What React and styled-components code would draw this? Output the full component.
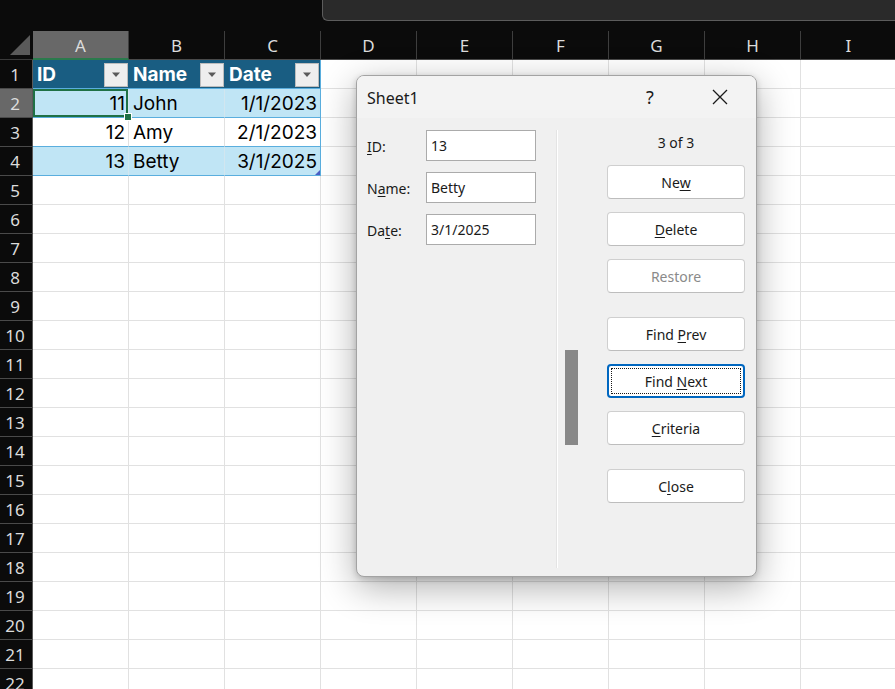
import React from "react";
import styled, { createGlobalStyle, css } from "styled-components";

const GlobalStyle = createGlobalStyle`
  html, body {
    margin: 0;
    padding: 0;
    background: #ffffff;
    overflow: hidden;
  }
  #root {
    position: relative;
    width: 895px;
    height: 689px;
    overflow: hidden;
  }
`;

const COLS = ["A", "B", "C", "D", "E", "F", "G", "H", "I"];
const ROW_COUNT = 22;

const rows = [
  { id: "11", name: "John", date: "1/1/2023" },
  { id: "12", name: "Amy", date: "2/1/2023" },
  { id: "13", name: "Betty", date: "3/1/2025" },
];

const Page = styled.div`
  width: 895px;
  height: 689px;
  background: #ffffff;
  display: flex;
  flex-direction: column;
  overflow: hidden;
`;

const TopBand = styled.div`
  height: 31px;
  flex-shrink: 0;
  background: #0b0b0b;
  display: flex;
`;

const FormulaBar = styled.div`
  margin-left: 322px;
  flex: 1;
  height: 20px;
  background: #2a2a2a;
  border: 1px solid #5c5c5c;
  border-top: none;
  border-right: none;
  border-bottom-left-radius: 6px;
`;

const Grid = styled.div`
  flex-shrink: 0;
  display: grid;
  grid-template-columns: 33px repeat(9, 96px);
  grid-auto-rows: 29px;
`;

const Corner = styled.div`
  background: #0b0b0b;
  border-bottom: 1px solid #3a3a3a;
  display: flex;
  align-items: flex-end;
  justify-content: flex-end;
  padding: 0 3px 4px 0;
  box-sizing: border-box;
`;

const ColHead = styled.div`
  box-sizing: border-box;
  background: ${(p) => (p.$selected ? "#686868" : "#0b0b0b")};
  border-right: 1px solid #3e3e3e;
  border-bottom: ${(p) => (p.$selected ? "2px solid #2a7a4c" : "1px solid #4a4a4a")};
  color: #dcdcdc;
  font-family: "Noto Sans", "Open Sans", sans-serif;
  font-size: 17px;
  display: flex;
  align-items: center;
  justify-content: center;
  padding-top: 1px;
`;

const RowHead = styled.div`
  box-sizing: border-box;
  background: ${(p) => (p.$selected ? "#686868" : "#0b0b0b")};
  border-bottom: 1px solid #4a4a4a;
  border-right: 1px solid #5a5a5a;
  color: #dcdcdc;
  font-family: "Noto Sans", "Open Sans", sans-serif;
  font-size: 17px;
  display: flex;
  align-items: center;
  justify-content: center;
  padding-right: 2px;
`;

const variants = {
  empty: css`
    background: #ffffff;
    border-right: 1px solid #e1e1e1;
    border-bottom: 1px solid #e1e1e1;
  `,
  head: css`
    background: #195d82;
    color: #ffffff;
    font-weight: 700;
    border-bottom: 1px solid #5aaede;
  `,
  band: css`
    background: #c0e5f5;
    border-right: 1px solid #d2e6ef;
    border-bottom: 1px solid #5aaede;
  `,
  plain: css`
    background: #ffffff;
    border-right: 1px solid #e1e1e1;
    border-bottom: 1px solid #5aaede;
  `,
};

const Cell = styled.div`
  position: relative;
  box-sizing: border-box;
  font-family: "Inter", "Liberation Sans", sans-serif;
  font-size: 19px;
  color: #000000;
  display: flex;
  align-items: center;
  justify-content: ${(p) => (p.$right ? "flex-end" : "space-between")};
  padding: ${(p) => (p.$right ? "1px 3px 0 0" : "1px 0 0 4px")};
  white-space: nowrap;
  ${(p) => variants[p.$variant]}
  ${(p) =>
    p.$lastCol &&
    css`
      border-right: 1px solid #5aaede;
    `}
  ${(p) =>
    p.$active &&
    css`
      box-shadow: inset 0 0 0 2px #1f7145;
      &::after {
        content: "";
        position: absolute;
        right: -4px;
        bottom: -4px;
        width: 6px;
        height: 6px;
        background: #1f7145;
        border: 1px solid #ffffff;
        z-index: 2;
      }
    `}
  ${(p) =>
    p.$resize &&
    css`
      &::after {
        content: "";
        position: absolute;
        right: 0;
        bottom: 0;
        width: 0;
        height: 0;
        border-left: 5px solid transparent;
        border-bottom: 5px solid #4a5ec4;
      }
    `}
`;

const FilterBtn = styled.div`
  width: 24px;
  height: 24px;
  box-sizing: border-box;
  margin-right: 1px;
  background: #eeeeee;
  border: 1px solid #bdbdbd;
  display: flex;
  align-items: center;
  justify-content: center;
`;

/* ---------- dialog ---------- */

const Dialog = styled.div`
  position: absolute;
  left: 356px;
  top: 75px;
  width: 401px;
  height: 502px;
  box-sizing: border-box;
  border: 1px solid #a3a3a3;
  border-radius: 8px;
  background: #f0f0f0;
  box-shadow: 0 10px 36px rgba(0, 0, 0, 0.32), 0 2px 6px rgba(0, 0, 0, 0.18);
  display: flex;
  flex-direction: column;
  overflow: hidden;
  font-family: "Noto Sans", "Open Sans", sans-serif;
  font-size: 14px;
  color: #1a1a1a;
`;

const TitleBar = styled.div`
  height: 42px;
  flex-shrink: 0;
  background: #f3f3f3;
  display: flex;
  align-items: center;
  padding-left: 10px;
`;

const Title = styled.div`
  flex: 1;
  font-size: 16px;
  padding-top: 1px;
`;

const HelpMark = styled.div`
  width: 46px;
  font-size: 18px;
  text-align: center;
  margin-right: 24px;
`;

const CloseX = styled.div`
  width: 46px;
  display: flex;
  justify-content: center;
  margin-right: 13px;
`;

const Body = styled.div`
  flex: 1;
  display: flex;
`;

const FieldPanel = styled.div`
  width: 199px;
  padding: 12px 0 0 10px;
  box-sizing: border-box;
  display: flex;
  flex-direction: column;
  gap: 11px;
`;

const FieldRow = styled.div`
  display: flex;
  align-items: center;
`;

const Label = styled.div`
  width: 59px;
  padding-top: 2px;
`;

const Input = styled.div`
  width: 110px;
  height: 31px;
  box-sizing: border-box;
  background: #ffffff;
  border: 1px solid #ababab;
  padding: 0 0 0 4px;
  display: flex;
  align-items: center;
`;

const Key = styled.span`
  text-decoration: underline;
  text-underline-offset: 2px;
`;

const Divider = styled.div`
  width: 1px;
  margin: 12px 0 8px;
  background: #ffffff;
  border-left: 1px solid #e4e4e4;
`;

const ScrollTrack = styled.div`
  width: 13px;
  margin-left: 7px;
  padding-top: 232px;
`;

const Thumb = styled.div`
  height: 95px;
  background: #888888;
`;

const ButtonPanel = styled.div`
  margin-left: 29px;
  width: 138px;
  padding-top: 15px;
  display: flex;
  flex-direction: column;
`;

const Counter = styled.div`
  text-align: center;
  height: 20px;
  line-height: 20px;
  margin-bottom: 12px;
`;

const Button = styled.div`
  height: 34px;
  box-sizing: border-box;
  background: #ffffff;
  border: 1px solid #cfcfcf;
  border-bottom-color: #bdbdbd;
  border-radius: 4px;
  display: flex;
  align-items: center;
  justify-content: center;
  color: ${(p) => (p.$disabled ? "#8a8a8a" : "#1a1a1a")};
  margin-top: ${(p) => p.$gap || 0}px;
  ${(p) =>
    p.$focused &&
    css`
      border: 2px solid #0067c0;
      padding: 2px;
    `}
`;

const FocusRing = styled.div`
  flex: 1;
  align-self: stretch;
  display: flex;
  align-items: center;
  justify-content: center;
  border: 1px dotted #1a1a1a;
`;

function Triangle() {
  return (
    <svg width="10" height="6" viewBox="0 0 10 6">
      <path d="M1 0.5 L9 0.5 L5 5 Z" fill="#5a5a5a" />
    </svg>
  );
}

function App() {
  const headers = ["ID", "Name", "Date"];

  const renderRow = (r) => {
    const cells = [];
    cells.push(
      <RowHead key="h" $selected={r === 2}>
        {r}
      </RowHead>
    );
    COLS.forEach((c, ci) => {
      const key = c + r;
      if (r === 1 && ci < 3) {
        cells.push(
          <Cell key={key} $variant="head" $lastCol={ci === 2}>
            {headers[ci]}
            <FilterBtn>
              <Triangle />
            </FilterBtn>
          </Cell>
        );
      } else if (r >= 2 && r <= 4 && ci < 3) {
        const d = rows[r - 2];
        const variant = r === 3 ? "plain" : "band";
        const value = ci === 0 ? d.id : ci === 1 ? d.name : d.date;
        cells.push(
          <Cell
            key={key}
            $variant={variant}
            $right={ci !== 1}
            $lastCol={ci === 2}
            $active={r === 2 && ci === 0}
            $resize={r === 4 && ci === 2}
          >
            {value}
          </Cell>
        );
      } else {
        cells.push(<Cell key={key} $variant="empty" />);
      }
    });
    return cells;
  };

  return (
    <Page>
      <GlobalStyle />
      <TopBand>
        <FormulaBar />
      </TopBand>
      <Grid>
        <Corner>
          <svg width="20" height="20" viewBox="0 0 20 20">
            <path d="M20 0 L20 20 L0 20 Z" fill="#5a5a5a" />
          </svg>
        </Corner>
        {COLS.map((c) => (
          <ColHead key={c} $selected={c === "A"}>
            {c}
          </ColHead>
        ))}
        {Array.from({ length: ROW_COUNT }, (_, i) => renderRow(i + 1))}
      </Grid>

      <Dialog>
        <TitleBar>
          <Title>Sheet1</Title>
          <HelpMark>?</HelpMark>
          <CloseX>
            <svg width="16" height="16" viewBox="0 0 16 16">
              <path d="M1 1 L15 15 M15 1 L1 15" stroke="#1a1a1a" strokeWidth="1.3" />
            </svg>
          </CloseX>
        </TitleBar>
        <Body>
          <FieldPanel>
            <FieldRow>
              <Label>
                <Key>I</Key>D:
              </Label>
              <Input>13</Input>
            </FieldRow>
            <FieldRow>
              <Label>
                N<Key>a</Key>me:
              </Label>
              <Input>Betty</Input>
            </FieldRow>
            <FieldRow>
              <Label>
                Da<Key>t</Key>e:
              </Label>
              <Input>3/1/2025</Input>
            </FieldRow>
          </FieldPanel>
          <Divider />
          <ScrollTrack>
            <Thumb />
          </ScrollTrack>
          <ButtonPanel>
            <Counter>3 of 3</Counter>
            <Button>
              <span>
                Ne<Key>w</Key>
              </span>
            </Button>
            <Button $gap={13}>
              <span>
                <Key>D</Key>elete
              </span>
            </Button>
            <Button $gap={13} $disabled>
              <span>Restore</span>
            </Button>
            <Button $gap={24}>
              <span>
                Find <Key>P</Key>rev
              </span>
            </Button>
            <Button $gap={13} $focused>
              <FocusRing>
                <span>
                  Find <Key>N</Key>ext
                </span>
              </FocusRing>
            </Button>
            <Button $gap={13}>
              <span>
                <Key>C</Key>riteria
              </span>
            </Button>
            <Button $gap={24}>
              <span>
                C<Key>l</Key>ose
              </span>
            </Button>
          </ButtonPanel>
        </Body>
      </Dialog>
    </Page>
  );
}

export default App;
